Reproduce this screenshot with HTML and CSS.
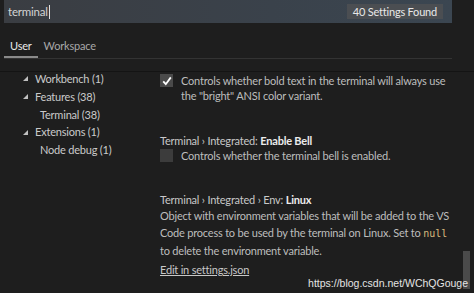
FILE: index.html
```html
<!DOCTYPE html>
<html>
<head>
  <meta charset="UTF-8" />
  <title>Settings</title>
<link rel="stylesheet" href="styles.css">
</head>
<body>

<div class="settings-editor">
  <div class="search-bar">
    <span class="search-text">terminal<span class="caret"></span></span>
    <span class="count-badge">40 Settings Found</span>
  </div>

  <div class="scope-tabs">
    <div class="tab active">User</div>
    <div class="tab">Workspace</div>
  </div>

  <div class="settings-body">
    <div class="toc">
      <div class="toc-row"><span class="twisty"></span>Workbench (1)</div>
      <div class="toc-row"><span class="twisty"></span>Features (38)</div>
      <div class="toc-row child">Terminal (38)</div>
      <div class="toc-row"><span class="twisty"></span>Extensions (1)</div>
      <div class="toc-row child">Node debug (1)</div>
    </div>

    <div class="setting-list">
      <div class="setting first">
        <div class="bool-row">
          <span class="checkbox checked">
            <svg width="12" height="12" viewBox="0 0 12 12"><path d="M2.2 6.4 L4.8 9.2 L9.8 2.4" fill="none" stroke="#fff" stroke-width="1.8"/></svg>
          </span>
          <div class="desc">Controls whether bold text in the terminal will always use the "bright" ANSI color variant.</div>
        </div>
      </div>

      <div class="setting">
        <div class="setting-title">Terminal › Integrated: <b>Enable Bell</b></div>
        <div class="bool-row">
          <span class="checkbox"></span>
          <div class="desc">Controls whether the terminal bell is enabled.</div>
        </div>
      </div>

      <div class="setting">
        <div class="setting-title">Terminal › Integrated › Env: <b>Linux</b></div>
        <div class="desc wide">Object with environment variables that will be added to the VS Code process to be used by the terminal on Linux. Set to <code>null</code> to delete the environment variable.</div>
        <a class="edit-link">Edit in settings.json</a>
      </div>
    </div>

    <div class="scrollbar"><div class="slider"></div></div>
  </div>

  <div class="watermark">https://blog.csdn.net/WChQGouge</div>
</div>

</body>
</html>
```

FILE: styles.css
```css
body {
  margin: 0;
  background: #1e1e1e;
  font-family: 'Lato', sans-serif;
  color: #cccccc;
  overflow: hidden;
}

.settings-editor {
  position: relative;
  width: 474px;
  height: 293px;
  display: flex;
  flex-direction: column;
}

.search-bar {
  margin: 0 22px 0 4px;
  height: 23px;
  background: linear-gradient(90deg, #3a3d42, #3a424b 60%, #3b4651);
  display: flex;
  align-items: center;
  justify-content: space-between;
  padding: 0 9px 0 4px;
}

.search-text {
  font-size: 11.5px;
  letter-spacing: -0.2px;
  color: #d4d4d4;
  display: flex;
  align-items: center;
}

.caret {
  display: inline-block;
  width: 1px;
  height: 14px;
  background: #e0e0e0;
  margin-left: 1px;
}

.count-badge {
  background: #4b4e52;
  color: #e8e8e8;
  font-size: 11px;
  letter-spacing: -0.2px;
  padding: 0 6px;
  height: 15px;
  line-height: 15px;
}

.scope-tabs {
  margin: 14px 22px 0 4px;
  height: 21px;
  display: flex;
  border-bottom: 1px solid #333333;
}

.tab {
  font-size: 11px;
  letter-spacing: -0.2px;
  color: #a8a8a8;
  padding: 0 6px;
  line-height: 17px;
}

.tab.active {
  color: #e8e8e8;
  border-bottom: 2px solid #8a8a8a;
}

.settings-body {
  flex: 1;
  display: grid;
  grid-template-columns: 160px 1fr 11px;
  margin-top: 12px;
  border-top: 1px solid #141414;
  position: relative;
}

.toc {
  padding: 0 0 0 22px;
  font-size: 11px;
  letter-spacing: -0.2px;
}

.toc-row {
  height: 17.75px;
  line-height: 17.75px;
  color: #cacaca;
  display: flex;
  align-items: center;
}

.toc-row:first-child {
  margin-top: -2px;
}

.toc-row.child {
  padding-left: 18px;
}

.twisty {
  width: 0;
  height: 0;
  border-left: 5px solid transparent;
  border-bottom: 5px solid #c0c0c0;
  margin: 0 7px 0 1px;
}

.setting-list {
  padding-right: 11px;
  font-size: 11px;
  letter-spacing: -0.2px;
}

.setting {
  margin-top: 29.5px;
}

.setting.first {
  margin-top: 1px;
}

.setting-title {
  color: #c8c8c8;
  line-height: 15px;
}

.setting-title b {
  color: #ececec;
}

.bool-row {
  display: flex;
  align-items: flex-start;
}

.checkbox {
  flex: none;
  width: 13px;
  height: 13px;
  background: #3c3c3c;
  margin: 1px 8px 0 0;
  display: flex;
  align-items: center;
  justify-content: center;
}

.checkbox.checked {
  background: #4a4a4a;
}

.desc {
  line-height: 15px;
  color: #bdbdbd;
}

.desc.wide {
  line-height: 17px;
}

code {
  font-family: 'DejaVu Sans Mono', monospace;
  font-size: 10px;
  letter-spacing: 0;
  color: #d7ba7d;
}

.edit-link {
  display: block;
  margin-top: 3px;
  line-height: 15px;
  color: #c8c8c8;
  text-decoration: underline;
}

.scrollbar {
  position: relative;
}

.slider {
  position: absolute;
  left: 0;
  width: 7px;
  top: 179px;
  height: 38px;
  background: #4a4a4a;
}

.watermark {
  position: absolute;
  right: 6px;
  bottom: 4px;
  font-family: 'Liberation Sans', sans-serif;
  font-size: 10.5px;
  color: #e4e4e4;
}
```
